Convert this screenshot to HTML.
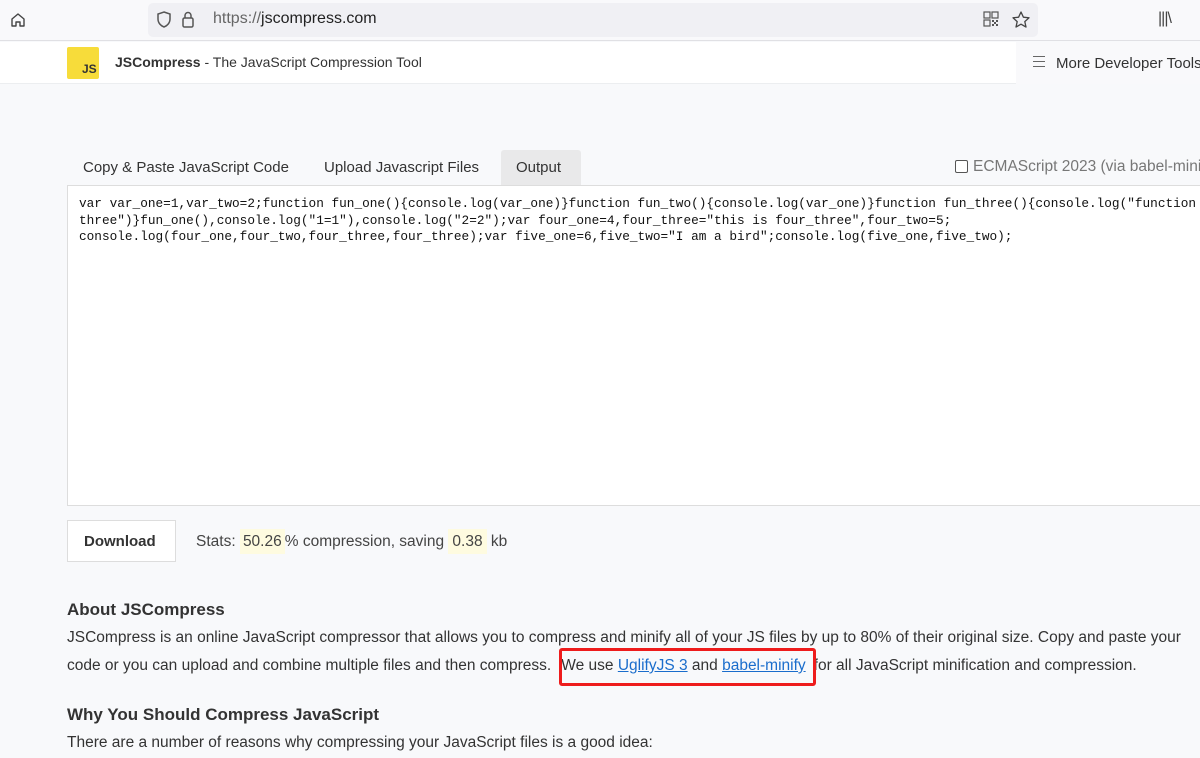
<!DOCTYPE html>
<html><head><meta charset="utf-8"><style>
*{box-sizing:border-box;margin:0;padding:0}
body{width:1200px;height:758px;overflow:hidden;background:#f8f9fb;font-family:"Liberation Sans",sans-serif;color:#333;position:relative}
.abs{position:absolute}
</style></head><body>
<div class="abs" style="left:0;top:0;width:1200px;height:41px;background:#f9f9fb;border-bottom:1px solid #e0e0e4"></div>
<svg class="abs" style="left:9px;top:11px" width="18" height="18" viewBox="0 0 18 18"><path d="M3 8 L9 3 L15 8 V15 H11 V11 H7 V15 H3 Z" fill="none" stroke="#444" stroke-width="1.4" stroke-linejoin="round"/></svg>
<div class="abs" style="left:148px;top:3px;width:890px;height:34px;background:#f0f0f4;border-radius:5px"></div>
<svg class="abs" style="left:156px;top:10px" width="40" height="20" viewBox="0 0 40 20"><path d="M8 2 L14 4 V9 C14 13 11 16 8 17 C5 16 2 13 2 9 V4 Z" fill="none" stroke="#555" stroke-width="1.5"/><rect x="27" y="8" width="10" height="9" rx="1.5" fill="none" stroke="#555" stroke-width="1.5"/><path d="M29 8 V5.5 a3 3 0 0 1 6 0 V8" fill="none" stroke="#555" stroke-width="1.5"/></svg>
<div class="abs" style="left:213px;top:10px;font-size:16px;color:#666">https://<span style="color:#222">jscompress.com</span></div>
<svg class="abs" style="left:983px;top:11px" width="16" height="16" viewBox="0 0 16 16" fill="#555"><rect x="1" y="1" width="6" height="6" fill="none" stroke="#555" stroke-width="1.2"/><rect x="9" y="1" width="6" height="6" fill="none" stroke="#555" stroke-width="1.2"/><rect x="1" y="9" width="6" height="6" fill="none" stroke="#555" stroke-width="1.2"/><rect x="9" y="9" width="2" height="2"/><rect x="13" y="9" width="2" height="2"/><rect x="11" y="11" width="2" height="2"/><rect x="9" y="13" width="2" height="2"/><rect x="13" y="13" width="2" height="2"/></svg>
<svg class="abs" style="left:1011px;top:10px" width="20" height="20" viewBox="0 0 20 20"><path d="M10 2 L12.4 7.2 L18 7.8 L13.8 11.6 L15 17 L10 14.2 L5 17 L6.2 11.6 L2 7.8 L7.6 7.2 Z" fill="none" stroke="#444" stroke-width="1.3" stroke-linejoin="round"/></svg>
<div class="abs" style="left:1158px;top:10px;font-size:16px;color:#444;letter-spacing:-1px">|||\</div>
<div class="abs" style="left:0;top:42px;width:1200px;height:42px;background:#fff;border-bottom:1px solid #eceef0"></div>
<div class="abs" style="left:67px;top:47px;width:32px;height:32px;background:#f7dc3a;border-radius:2px"></div>
<div class="abs" style="left:82px;top:62px;font-size:12px;font-weight:bold;color:#333">JS</div>
<div class="abs" style="left:115px;top:54px;font-size:14px;color:#333"><b>JSCompress</b> - The JavaScript Compression Tool</div>
<div class="abs" style="left:1016px;top:42px;width:184px;height:42px;background:#f9f9fb"></div>
<div class="abs" style="left:1033px;top:56px;width:12px;height:11px;border-top:1px solid #666;border-bottom:1px solid #666"></div>
<div class="abs" style="left:1033px;top:61px;width:12px;height:1px;background:#666"></div>
<div class="abs" style="left:1056px;top:55px;font-size:15px;color:#333;white-space:nowrap">More Developer Tools</div>
<div class="abs" style="left:83px;top:159px;font-size:15px;color:#333">Copy &amp; Paste JavaScript Code</div>
<div class="abs" style="left:324px;top:159px;font-size:15px;color:#333">Upload Javascript Files</div>
<div class="abs" style="left:501px;top:150px;width:80px;height:36px;background:#e9e9ea;border-radius:3px 3px 0 0"></div>
<div class="abs" style="left:516px;top:159px;font-size:15px;color:#333">Output</div>
<div class="abs" style="left:955px;top:160px;width:13px;height:13px;border:1.5px solid #555;border-radius:2px;background:#fff"></div>
<div class="abs" style="left:973px;top:158px;font-size:15.5px;color:#777;white-space:nowrap">ECMAScript 2023 (via babel-minify</div>
<div class="abs" style="left:67px;top:185px;width:1140px;height:321px;background:#fff;border:1px solid #ddd"></div>
<div class="abs" style="left:79px;top:196px;font-family:'Liberation Mono',monospace;font-size:12.75px;line-height:16.5px;color:#111;white-space:pre;width:1121px;overflow:hidden">var var_one=1,var_two=2;function fun_one(){console.log(var_one)}function fun_two(){console.log(var_one)}function fun_three(){console.log("function
three")}fun_one(),console.log("1=1"),console.log("2=2");var four_one=4,four_three="this is four_three",four_two=5;
console.log(four_one,four_two,four_three,four_three);var five_one=6,five_two="I am a bird";console.log(five_one,five_two);</div>
<div class="abs" style="left:67px;top:520px;width:109px;height:42px;background:#fff;border:1px solid #ddd"></div>
<div class="abs" style="left:84px;top:533px;font-size:15px;font-weight:bold;color:#333">Download</div>
<div class="abs" style="left:196px;top:533px;font-size:15.5px;color:#444;white-space:pre">Stats: <span style="background:#fefbe0;padding:4px 3px">50.26</span>% compression, saving <span style="background:#fefbe0;padding:4px 4px">0.38</span> kb</div>
<div class="abs" style="left:67px;top:600px;font-size:17px;font-weight:bold;color:#333">About JSCompress</div>
<div class="abs" style="left:67px;top:624px;width:1133px;font-size:15.5px;line-height:28px;color:#333;white-space:nowrap">JSCompress is an online JavaScript compressor that allows you to compress and minify all of your JS files by up to 80% of their original size. Copy and paste your<br>code or you can upload and combine multiple files and then compress.<span style="margin-left:10px">We use <span style="color:#1a6dcc;text-decoration:underline">UglifyJS 3</span> and <span style="color:#1a6dcc;text-decoration:underline">babel-minify</span></span><span style="margin-left:8px">for all JavaScript minification and compression.</span></div>
<div class="abs" style="left:559px;top:648px;width:257px;height:38px;border:3px solid #ee1c1c;border-radius:3px"></div>
<div class="abs" style="left:67px;top:705px;font-size:17px;font-weight:bold;color:#333">Why You Should Compress JavaScript</div>
<div class="abs" style="left:67px;top:734px;font-size:15.5px;color:#333">There are a number of reasons why compressing your JavaScript files is a good idea:</div>
</body></html>
